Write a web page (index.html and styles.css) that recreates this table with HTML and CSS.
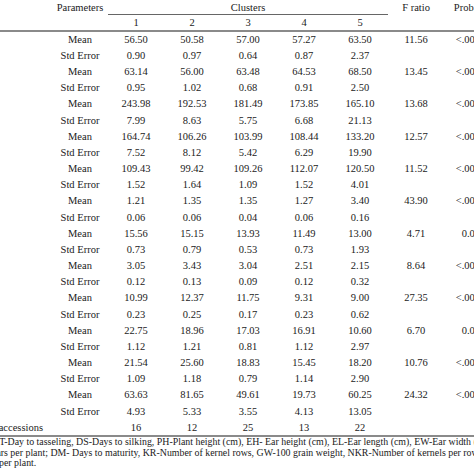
FILE: index.html
```html
<!DOCTYPE html>
<html>
<head>
<meta charset="utf-8">
<link rel="stylesheet" href="styles.css">
</head>
<body>
<div class="sheet">
<table class="tbl">
<colgroup>
<col class="c-trait"><col class="c-param"><col class="c-cl"><col class="c-cl"><col class="c-cl"><col class="c-cl"><col class="c-cl"><col class="c-f"><col class="c-p">
</colgroup>
<thead>
<tr class="r1"><th></th><th>Parameters</th><th colspan="5" class="clusters">Clusters</th><th>F ratio</th><th class="prob-h">Prob.</th></tr>
<tr class="r2"><th></th><th></th><th>1</th><th>2</th><th>3</th><th>4</th><th>5</th><th></th><th></th></tr>
</thead>
<tbody>
<tr><td></td><td>Mean</td><td>56.50</td><td>50.58</td><td>57.00</td><td>57.27</td><td>63.50</td><td>11.56</td><td class="p">&lt;.001</td></tr>
<tr><td></td><td>Std Error</td><td>0.90</td><td>0.97</td><td>0.64</td><td>0.87</td><td>2.37</td><td></td><td></td></tr>
<tr><td></td><td>Mean</td><td>63.14</td><td>56.00</td><td>63.48</td><td>64.53</td><td>68.50</td><td>13.45</td><td class="p">&lt;.001</td></tr>
<tr><td></td><td>Std Error</td><td>0.95</td><td>1.02</td><td>0.68</td><td>0.91</td><td>2.50</td><td></td><td></td></tr>
<tr><td></td><td>Mean</td><td>243.98</td><td>192.53</td><td>181.49</td><td>173.85</td><td>165.10</td><td>13.68</td><td class="p">&lt;.001</td></tr>
<tr class="tall"><td></td><td>Std Error</td><td>7.99</td><td>8.63</td><td>5.75</td><td>6.68</td><td>21.13</td><td></td><td></td></tr>
<tr><td></td><td>Mean</td><td>164.74</td><td>106.26</td><td>103.99</td><td>108.44</td><td>133.20</td><td>12.57</td><td class="p">&lt;.001</td></tr>
<tr><td></td><td>Std Error</td><td>7.52</td><td>8.12</td><td>5.42</td><td>6.29</td><td>19.90</td><td></td><td></td></tr>
<tr><td></td><td>Mean</td><td>109.43</td><td>99.42</td><td>109.26</td><td>112.07</td><td>120.50</td><td>11.52</td><td class="p">&lt;.001</td></tr>
<tr><td></td><td>Std Error</td><td>1.52</td><td>1.64</td><td>1.09</td><td>1.52</td><td>4.01</td><td></td><td></td></tr>
<tr><td></td><td>Mean</td><td>1.21</td><td>1.35</td><td>1.35</td><td>1.27</td><td>3.40</td><td>43.90</td><td class="p">&lt;.001</td></tr>
<tr class="tall"><td></td><td>Std Error</td><td>0.06</td><td>0.06</td><td>0.04</td><td>0.06</td><td>0.16</td><td></td><td></td></tr>
<tr><td></td><td>Mean</td><td>15.56</td><td>15.15</td><td>13.93</td><td>11.49</td><td>13.00</td><td>4.71</td><td class="p">0.01</td></tr>
<tr><td></td><td>Std Error</td><td>0.73</td><td>0.79</td><td>0.53</td><td>0.73</td><td>1.93</td><td></td><td></td></tr>
<tr><td></td><td>Mean</td><td>3.05</td><td>3.43</td><td>3.04</td><td>2.51</td><td>2.15</td><td>8.64</td><td class="p">&lt;.001</td></tr>
<tr><td></td><td>Std Error</td><td>0.12</td><td>0.13</td><td>0.09</td><td>0.12</td><td>0.32</td><td></td><td></td></tr>
<tr><td></td><td>Mean</td><td>10.99</td><td>12.37</td><td>11.75</td><td>9.31</td><td>9.00</td><td>27.35</td><td class="p">&lt;.001</td></tr>
<tr class="tall"><td></td><td>Std Error</td><td>0.23</td><td>0.25</td><td>0.17</td><td>0.23</td><td>0.62</td><td></td><td></td></tr>
<tr><td></td><td>Mean</td><td>22.75</td><td>18.96</td><td>17.03</td><td>16.91</td><td>10.60</td><td>6.70</td><td class="p">0.01</td></tr>
<tr><td></td><td>Std Error</td><td>1.12</td><td>1.21</td><td>0.81</td><td>1.12</td><td>2.97</td><td></td><td></td></tr>
<tr><td></td><td>Mean</td><td>21.54</td><td>25.60</td><td>18.83</td><td>15.45</td><td>18.20</td><td>10.76</td><td class="p">&lt;.001</td></tr>
<tr><td></td><td>Std Error</td><td>1.09</td><td>1.18</td><td>0.79</td><td>1.14</td><td>2.90</td><td></td><td></td></tr>
<tr><td></td><td>Mean</td><td>63.63</td><td>81.65</td><td>49.61</td><td>19.73</td><td>60.25</td><td>24.32</td><td class="p">&lt;.001</td></tr>
<tr class="tall"><td></td><td>Std Error</td><td>4.93</td><td>5.33</td><td>3.55</td><td>4.13</td><td>13.05</td><td></td><td></td></tr>
<tr class="last"><td class="acc" colspan="2">No. of accessions</td><td>16</td><td>12</td><td>25</td><td>13</td><td>22</td><td></td><td></td></tr>
</tbody>
</table>
<div class="notes">
<div class="line l1">DT-Day to tasseling, DS-Days to silking, PH-Plant height (cm), EH- Ear height (cm), EL-Ear length (cm), EW-Ear width (cm), NE-Number of</div>
<div class="line l2">ears per plant; DM- Days to maturity, KR-Number of kernel rows, GW-100 grain weight, NKR-Number of kernels per row, GY-Grain yield</div>
<div class="line l3">per plant.</div>
</div>
</div>
</body>
</html>
```
FILE: styles.css
```css
html, body {
  margin: 0;
  padding: 0;
  background: #ffffff;
}
body {
  width: 474px;
  height: 474px;
  overflow: hidden;
  font-family: "Liberation Serif", "Times New Roman", serif;
  color: #1a1a1a;
}
.sheet {
  margin-left: -48px;
  padding-top: 1px;
  width: 600px;
}
.tbl {
  border-collapse: separate;
  border-spacing: 0;
  table-layout: fixed;
  width: 538px;
  font-size: 10.5px;
}
.c-trait { width: 100px; }
.c-param { width: 56px; }
.c-cl { width: 56px; }
.c-f { width: 56px; }
.c-p { width: 46px; }
.tbl th, .tbl td {
  padding: 0;
  text-align: center;
  font-weight: normal;
  white-space: nowrap;
  overflow: visible;
}
.r1 th {
  height: 13px;
  line-height: 13px;
  vertical-align: top;
}
.clusters {
  border-bottom: 1px solid #666;
}
.tbl th.prob-h {
  padding-right: 4px;
}
.r2 th {
  height: 15px;
  line-height: 15px;
  border-bottom: 2px solid #8a8a8a;
}
.tbl td {
  height: 16px;
  line-height: 16px;
}
.tbl tr.tall td {
  height: 17px;
  line-height: 17px;
}
.tbl td.p {
  text-align: right;
  padding-right: 10px;
}
.tbl tr.last td {
  height: 15px;
  line-height: 15px;
  border-bottom: 2px solid #8a8a8a;
}
.tbl td.acc {
  text-align: right;
  padding-right: 65px;
}
.notes {
  font-size: 9.9px;
  line-height: 10.5px;
  margin-left: 40px;
}
.line {
  white-space: nowrap;
}
.l3 { margin-left: 7px; }
```
